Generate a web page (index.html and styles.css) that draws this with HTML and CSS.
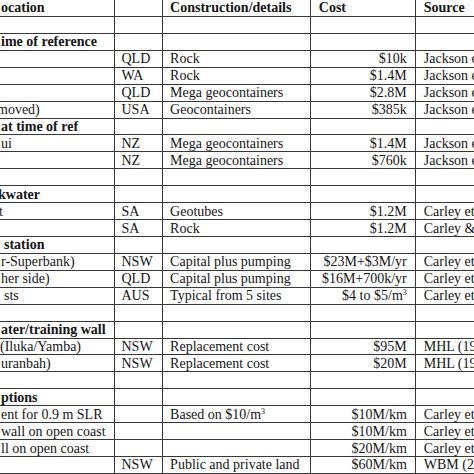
FILE: index.html
```html
<!DOCTYPE html>
<html lang="en">
<head>
<meta charset="utf-8">
<title>Costs</title>
<link rel="stylesheet" href="styles.css">
</head>
<body>
<table class="costs">
  <colgroup>
    <col class="c-loc"><col class="c-st"><col class="c-con"><col class="c-cost"><col class="c-src">
  </colgroup>
  <thead>
    <tr class="head"><th class="loc">ocation</th><th></th><th>Construction/details</th><th>Cost</th><th>Source</th></tr>
  </thead>
  <tbody>
    <tr><td class="loc"></td><td></td><td></td><td class="cost"></td><td></td></tr>
    <tr><td class="loc sec">ime of reference</td><td></td><td></td><td class="cost"></td><td></td></tr>
    <tr><td class="loc"></td><td>QLD</td><td>Rock</td><td class="cost">$10k</td><td class="src">Jackson et al. (2010)</td></tr>
    <tr><td class="loc"></td><td>WA</td><td>Rock</td><td class="cost">$1.4M</td><td class="src">Jackson et al. (2010)</td></tr>
    <tr><td class="loc"></td><td>QLD</td><td>Mega geocontainers</td><td class="cost">$2.8M</td><td class="src">Jackson et al. (2010)</td></tr>
    <tr><td class="loc cut4">moved)</td><td>USA</td><td>Geocontainers</td><td class="cost">$385k</td><td class="src">Jackson et al. (2010)</td></tr>
    <tr><td class="loc sec">at time of ref</td><td></td><td></td><td class="cost"></td><td></td></tr>
    <tr><td class="loc">ui</td><td>NZ</td><td>Mega geocontainers</td><td class="cost">$1.4M</td><td class="src">Jackson et al. (2010)</td></tr>
    <tr><td class="loc"></td><td>NZ</td><td>Mega geocontainers</td><td class="cost">$760k</td><td class="src">Jackson et al. (2010)</td></tr>
    <tr><td class="loc"></td><td></td><td></td><td class="cost"></td><td></td></tr>
    <tr><td class="loc sec cut3">kwater</td><td></td><td></td><td class="cost"></td><td></td></tr>
    <tr><td class="loc cut2">t</td><td>SA</td><td>Geotubes</td><td class="cost">$1.2M</td><td class="src">Carley et al. (2010)</td></tr>
    <tr><td class="loc"></td><td>SA</td><td>Rock</td><td class="cost">$1.2M</td><td class="src">Carley &amp; Cox (2006)</td></tr>
    <tr><td class="loc sec ind3">station</td><td></td><td></td><td class="cost"></td><td></td></tr>
    <tr><td class="loc">r-Superbank)</td><td>NSW</td><td>Capital plus pumping</td><td class="cost">$23M+$3M/yr</td><td class="src">Carley et al. (2010)</td></tr>
    <tr><td class="loc">her side)</td><td>QLD</td><td>Capital plus pumping</td><td class="cost">$16M+700k/yr</td><td class="src">Carley et al. (2010)</td></tr>
    <tr><td class="loc ind3">sts</td><td>AUS</td><td>Typical from 5 sites</td><td class="cost">$4 to $5/m<sup class="sup">3</sup></td><td class="src">Carley et al. (2010)</td></tr>
    <tr><td class="loc"></td><td></td><td></td><td class="cost"></td><td></td></tr>
    <tr><td class="loc sec">ater/training wall</td><td></td><td></td><td class="cost"></td><td></td></tr>
    <tr><td class="loc cut1">(Iluka/Yamba)</td><td>NSW</td><td>Replacement cost</td><td class="cost">$95M</td><td class="src">MHL (1998)</td></tr>
    <tr><td class="loc">uranbah)</td><td>NSW</td><td>Replacement cost</td><td class="cost">$20M</td><td class="src">MHL (1998)</td></tr>
    <tr><td class="loc"></td><td></td><td></td><td class="cost"></td><td></td></tr>
    <tr><td class="loc sec">ptions</td><td></td><td></td><td class="cost"></td><td></td></tr>
    <tr><td class="loc">ent for 0.9 m SLR</td><td></td><td>Based on $10/m<sup class="sup">3</sup></td><td class="cost">$10M/km</td><td class="src">Carley et al. (2010)</td></tr>
    <tr><td class="loc">wall on open coast</td><td></td><td></td><td class="cost">$10M/km</td><td class="src">Carley et al. (2010)</td></tr>
    <tr><td class="loc">ll on open coast</td><td></td><td></td><td class="cost">$20M/km</td><td class="src">Carley et al. (2010)</td></tr>
    <tr><td class="loc"></td><td>NSW</td><td>Public and private land</td><td class="cost">$60M/km</td><td class="src">WBM (2000)</td></tr>
  </tbody>
</table>
</body>
</html>
```

FILE: styles.css
```css
html, body {
  margin: 0;
  padding: 0;
  background: #ffffff;
  overflow: hidden;
}

.costs {
  border-collapse: collapse;
  table-layout: fixed;
  width: 598px;
  margin: -2.5px 0 0 -2.5px;
  font-family: "Liberation Serif", "Times New Roman", serif;
  font-size: 14px;
  color: #151515;
}

.c-loc { width: 116px; }
.c-st { width: 48.6px; }
.c-con { width: 147.7px; }
.c-cost { width: 105px; }
.c-src { width: 180px; }

.costs tr {
  height: 16.93px;
}

.costs tr.head {
  height: 18.5px;
}

.costs th,
.costs td {
  border: 1px solid #383838;
  padding: 0 6.5px 0 7px;
  line-height: 15px;
  white-space: nowrap;
  overflow: hidden;
  text-align: left;
  vertical-align: middle;
}

.costs th {
  font-weight: bold;
  vertical-align: top;
  padding-top: 1px;
}

.costs .loc {
  padding-left: 2.5px;
}

.costs .sec {
  font-weight: bold;
}

.costs .cost {
  text-align: right;
  padding-right: 8px;
}

.costs th:nth-child(4) {
  text-align: left;
  padding-left: 8px;
}

.costs .src,
.costs th:nth-child(5) {
  padding-left: 8px;
}

.cut1 { text-indent: -1px; }
.cut2 { text-indent: -2px; }
.cut3 { text-indent: -3px; }
.cut4 { text-indent: -4px; }
.ind3 { text-indent: 3px; }

.sup {
  font-size: 8px;
  line-height: 0;
  vertical-align: 5px;
}
```
